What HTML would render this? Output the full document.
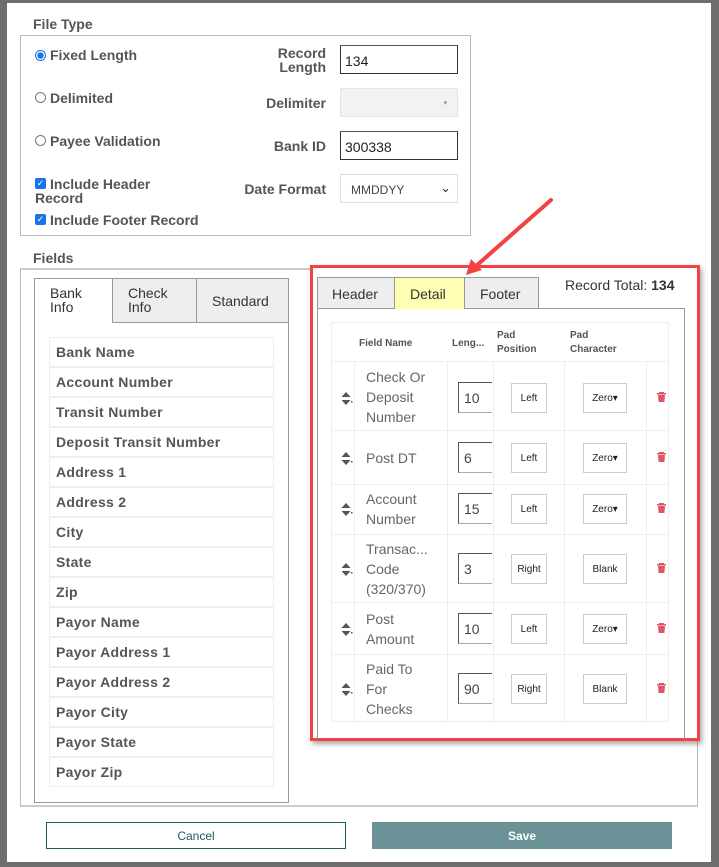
<!DOCTYPE html>
<html><head><meta charset="utf-8"><style>
*{box-sizing:border-box;margin:0;padding:0}
body{width:719px;height:867px;background:#6e6e6e;font-family:"Liberation Sans",sans-serif;position:relative;overflow:hidden;color:#555}
.a{position:absolute}
.modal{left:7px;top:3px;width:704px;height:859px;background:#fff}
.h{font-weight:bold;font-size:14px;color:#555}
.lb{font-weight:bold;font-size:14px;color:#555;line-height:14px}
.rl{text-align:right;width:130px;left:196px}
.inp{border:1px solid #333;border-top-color:#555;background:#fff;font-size:14px;color:#222;padding:7px 0 0 4px}
.radio{width:11px;height:11px;border:1px solid #777;border-radius:50%;background:#fff}
.cb{width:11px;height:11px;background:#1a73e8;border-radius:2px;color:#fff;font-size:9px;line-height:11px;text-align:center}
.tab{border:1px solid #999;background:#eee;font-size:14px;color:#333}
.row{left:49px;width:225px;height:30px;border:1px solid #eee;font-weight:bold;font-size:14px;letter-spacing:.3px;color:#555;padding:6px 0 0 6px}
.fn{font-size:14px;color:#666;line-height:20px}
.sm{border:1px solid #ccc;font-size:10px;color:#222;text-align:center;background:#fff}
.li{border:1px solid #555;border-right:none;border-bottom-color:#aaa;font-size:14px;color:#444;padding:7px 0 0 5px;background:#fff}
</style></head><body>
<div class="a modal"></div>
<div class="a h" style="left:33px;top:16px">File Type</div>
<div class="a" style="left:20px;top:35px;width:451px;height:201px;border:1px solid #bbb"></div>
<div class="a radio" style="left:35px;top:50px;border-color:#1a73e8;background:radial-gradient(#1a73e8 45%,#fff 55%)"></div>
<div class="a lb" style="left:50px;top:48px">Fixed Length</div>
<div class="a radio" style="left:35px;top:92px"></div>
<div class="a lb" style="left:50px;top:91px">Delimited</div>
<div class="a radio" style="left:35px;top:135px"></div>
<div class="a lb" style="left:50px;top:134px">Payee Validation</div>
<div class="a cb" style="left:35px;top:178px">✓</div>
<div class="a lb" style="left:35px;top:177px;width:160px;text-indent:15px">Include Header Record</div>
<div class="a cb" style="left:35px;top:214px">✓</div>
<div class="a lb" style="left:50px;top:213px">Include Footer Record</div>
<div class="a lb rl" style="top:46px">Record<br>Length</div>
<div class="a lb rl" style="top:96px">Delimiter</div>
<div class="a lb rl" style="top:139px">Bank ID</div>
<div class="a lb rl" style="top:182px">Date Format</div>
<div class="a inp" style="left:340px;top:45px;width:118px;height:29px">134</div>
<div class="a" style="left:340px;top:88px;width:118px;height:29px;background:#f2f2f2;border:1px solid #e4e4e4"><span class="a" style="right:10px;top:10px;font-size:7px;color:#888">▾</span></div>
<div class="a inp" style="left:340px;top:131px;width:118px;height:29px">300338</div>
<div class="a" style="left:340px;top:174px;width:118px;height:29px;border:1px solid #ddd;font-size:12px;color:#444;padding:8px 0 0 10px">MMDDYY<span class="a" style="right:6px;top:5px;font-size:13px;color:#333">⌄</span></div>

<div class="a h" style="left:33px;top:250px">Fields</div>
<div class="a" style="left:20px;top:268px;width:678px;height:539px;border:1px solid #bbb;border-top:2px solid #ccc;border-bottom:2px solid #ccc"></div>
<div class="a" style="left:34px;top:278px;width:255px;height:525px;border:1px solid #999"></div>
<div class="a" style="left:34px;top:278px;width:79px;height:45px;background:#fff;border:1px solid #999;border-bottom:none;font-size:14px;color:#333;padding:7px 0 0 15px;line-height:14px">Bank<br>Info</div>
<div class="a tab" style="left:112px;top:278px;width:85px;height:45px;padding:7px 0 0 15px;line-height:14px">Check<br>Info</div>
<div class="a tab" style="left:196px;top:278px;width:93px;height:45px;padding:14px 0 0 15px">Standard</div>
<div class="a" style="left:112px;top:322px;width:177px;height:1px;background:#999"></div>
<div class="a row" style="top:337px">Bank Name</div>
<div class="a row" style="top:367px">Account Number</div>
<div class="a row" style="top:397px">Transit Number</div>
<div class="a row" style="top:427px">Deposit Transit Number</div>
<div class="a row" style="top:457px">Address 1</div>
<div class="a row" style="top:487px">Address 2</div>
<div class="a row" style="top:517px">City</div>
<div class="a row" style="top:547px">State</div>
<div class="a row" style="top:577px">Zip</div>
<div class="a row" style="top:607px">Payor Name</div>
<div class="a row" style="top:637px">Payor Address 1</div>
<div class="a row" style="top:667px">Payor Address 2</div>
<div class="a row" style="top:697px">Payor City</div>
<div class="a row" style="top:727px">Payor State</div>
<div class="a row" style="top:757px">Payor Zip</div>

<div class="a" style="left:310px;top:265px;width:390px;height:476px;border:3px solid #f04444;box-shadow:2px 3px 5px rgba(0,0,0,.35);background:#fff"></div>
<div class="a" style="left:317px;top:308px;width:368px;height:431px;border:1px solid #999;border-bottom:none"></div>
<div class="a tab" style="left:317px;top:277px;width:78px;height:32px;padding:8px 0 0 14px">Header</div>
<div class="a tab" style="left:394px;top:277px;width:71px;height:32px;padding:8px 0 0 15px;background:#ffffb3;border-bottom:none">Detail</div>
<div class="a tab" style="left:464px;top:277px;width:75px;height:32px;padding:8px 0 0 15px">Footer</div>
<div class="a" style="left:565px;top:277px;font-size:14px;color:#333">Record Total: <b>134</b></div>

<div class="a" style="left:331px;top:322px;width:338px;height:400px;border:1px solid #eee"></div>
<div class="a" style="left:331px;top:361px;width:338px;height:1px;background:#eee"></div>
<div class="a lb" style="left:359px;top:337px;font-size:10px">Field Name</div>
<div class="a lb" style="left:452px;top:337px;font-size:10px">Leng...</div>
<div class="a lb" style="left:497px;top:329px;font-size:10px">Pad<br>Position</div>
<div class="a lb" style="left:570px;top:329px;font-size:10px">Pad<br>Character</div>

<div class="a" style="left:354px;top:362px;width:1px;height:360px;background:#eee"></div>
<div class="a" style="left:447px;top:362px;width:1px;height:360px;background:#eee"></div>
<div class="a" style="left:493px;top:362px;width:1px;height:360px;background:#eee"></div>
<div class="a" style="left:564px;top:362px;width:1px;height:360px;background:#eee"></div>
<div class="a" style="left:646px;top:362px;width:1px;height:360px;background:#eee"></div>

<div class="a" style="left:331px;top:430px;width:338px;height:1px;background:#eee"></div>
<div class="a" style="left:331px;top:484px;width:338px;height:1px;background:#eee"></div>
<div class="a" style="left:331px;top:534px;width:338px;height:1px;background:#eee"></div>
<div class="a" style="left:331px;top:602px;width:338px;height:1px;background:#eee"></div>
<div class="a" style="left:331px;top:654px;width:338px;height:1px;background:#eee"></div>

<div class="a fn" style="left:366px;top:367px">Check Or<br>Deposit<br>Number</div>
<div class="a fn" style="left:366px;top:448px">Post DT</div>
<div class="a fn" style="left:366px;top:489px">Account<br>Number</div>
<div class="a fn" style="left:366px;top:539px">Transac...<br>Code<br>(320/370)</div>
<div class="a fn" style="left:366px;top:609px">Post<br>Amount</div>
<div class="a fn" style="left:366px;top:659px">Paid To<br>For<br>Checks</div>

<div class="a li" style="left:458px;top:382px;width:34px;height:31px">10</div>
<div class="a li" style="left:458px;top:442px;width:34px;height:31px">6</div>
<div class="a li" style="left:458px;top:493px;width:34px;height:31px">15</div>
<div class="a li" style="left:458px;top:553px;width:34px;height:31px">3</div>
<div class="a li" style="left:458px;top:613px;width:34px;height:31px">10</div>
<div class="a li" style="left:458px;top:673px;width:34px;height:31px">90</div>

<div class="a sm" style="left:511px;top:383px;width:36px;height:30px;padding-top:9px">Left</div>
<div class="a sm" style="left:511px;top:443px;width:36px;height:30px;padding-top:9px">Left</div>
<div class="a sm" style="left:511px;top:494px;width:36px;height:30px;padding-top:9px">Left</div>
<div class="a sm" style="left:511px;top:554px;width:36px;height:30px;padding-top:9px">Right</div>
<div class="a sm" style="left:511px;top:614px;width:36px;height:30px;padding-top:9px">Left</div>
<div class="a sm" style="left:511px;top:674px;width:36px;height:30px;padding-top:9px">Right</div>

<div class="a sm" style="left:583px;top:383px;width:44px;height:30px;padding-top:9px">Zero▾</div>
<div class="a sm" style="left:583px;top:443px;width:44px;height:30px;padding-top:9px">Zero▾</div>
<div class="a sm" style="left:583px;top:494px;width:44px;height:30px;padding-top:9px">Zero▾</div>
<div class="a sm" style="left:583px;top:554px;width:44px;height:30px;padding-top:9px">Blank</div>
<div class="a sm" style="left:583px;top:614px;width:44px;height:30px;padding-top:9px">Zero▾</div>
<div class="a sm" style="left:583px;top:674px;width:44px;height:30px;padding-top:9px">Blank</div>

<svg class="a" style="left:0;top:0" width="719" height="867">
<defs><g id="ar"><path d="M341.5 -1l4.5 -5 4.5 5zM341.5 2l4.5 5 4.5-5z"/><rect x="351" y="3" width="1.5" height="1.5"/></g></defs>
<g fill="#555">
<use href="#ar" y="398"/><use href="#ar" y="458"/><use href="#ar" y="509"/>
<use href="#ar" y="569"/><use href="#ar" y="629"/><use href="#ar" y="689"/>
</g>
<g fill="#e05566">
<path d="M657 393h9v1.5h-9zM659 392h5v1h-5zM658 395h7l-.6 7h-5.8z"/>
<path d="M657 453h9v1.5h-9zM659 452h5v1h-5zM658 455h7l-.6 7h-5.8z"/>
<path d="M657 504h9v1.5h-9zM659 503h5v1h-5zM658 506h7l-.6 7h-5.8z"/>
<path d="M657 564h9v1.5h-9zM659 563h5v1h-5zM658 566h7l-.6 7h-5.8z"/>
<path d="M657 624h9v1.5h-9zM659 623h5v1h-5zM658 626h7l-.6 7h-5.8z"/>
<path d="M657 684h9v1.5h-9zM659 683h5v1h-5zM658 686h7l-.6 7h-5.8z"/>
</g>
<line x1="551" y1="200" x2="476" y2="266" stroke="#f04444" stroke-width="4" stroke-linecap="round"/>
<path d="M466 275l5-16 11 11z" fill="#f04444"/>
</svg>

<div class="a" style="left:46px;top:822px;width:300px;height:27px;border:1px solid #1e5a5f;color:#1e5a5f;font-size:12px;text-align:center;padding-top:6px">Cancel</div>
<div class="a" style="left:372px;top:822px;width:300px;height:27px;background:#6b9297;color:#fff;font-weight:bold;font-size:12px;text-align:center;padding-top:7px">Save</div>
</body></html>
